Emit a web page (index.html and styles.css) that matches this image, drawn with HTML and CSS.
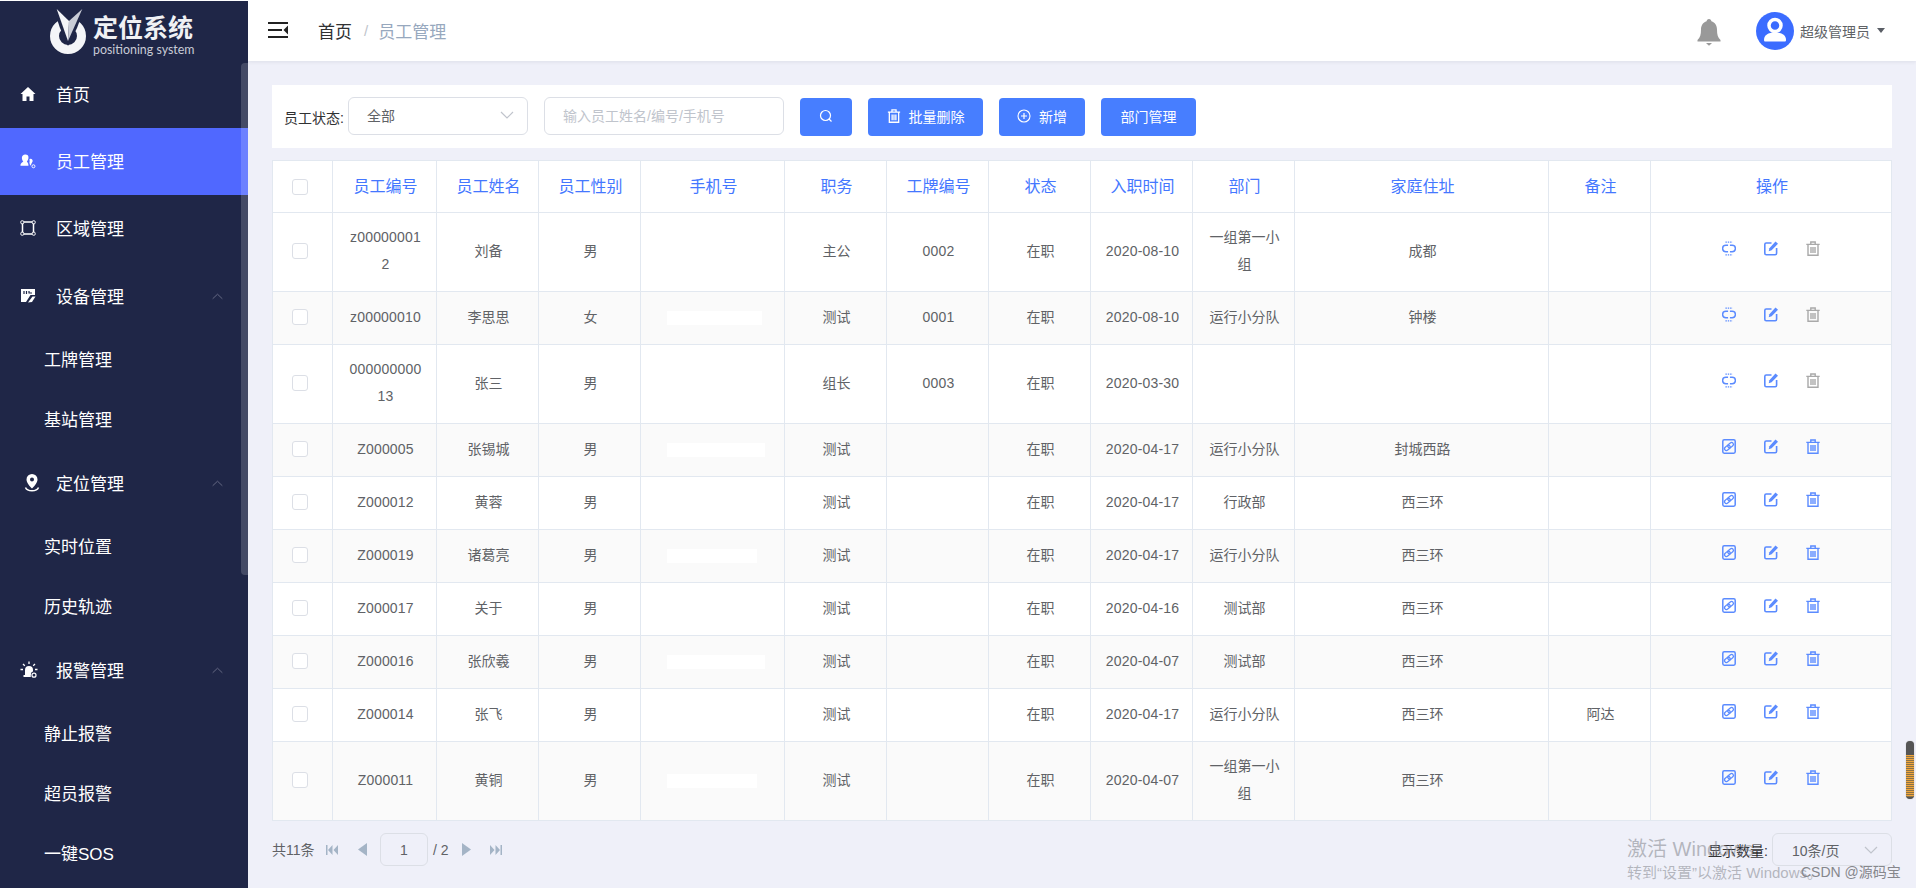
FILE: index.html
```html
<!DOCTYPE html>
<html lang="zh-CN">
<head>
<meta charset="utf-8">
<title>定位系统 - 员工管理</title>
<link rel="stylesheet" href="styles.css">
</head>
<body>
<svg class="defs" aria-hidden="true">
  <symbol id="i-unlink" viewBox="0 0 14 16"><g fill="none" stroke="currentColor"><path stroke-width="1.500" d="M6 4.600H3.600a3.400 3.400 0 0 0 0 6.800H6M8 4.600h2.400a3.400 3.400 0 0 1 0 6.800H8"/><path stroke-width="1.400" stroke-dasharray="1.500 1" d="M3.200 1.200h7.600M3.200 14.800h7.600"/></g></symbol>
  <symbol id="i-link" viewBox="0 0 14 15"><g fill="none" stroke="currentColor"><rect x=".8" y=".8" width="12.400" height="13.400" rx="1.400" stroke-width="1.500"/><g transform="rotate(-40 7 7.500)" stroke-width="1.300"><rect x="1.800" y="5.600" width="6.200" height="3.800" rx="1.900"/><rect x="6" y="5.600" width="6.200" height="3.800" rx="1.900"/></g></g></symbol>
  <symbol id="i-edit" viewBox="0 0 14 14"><path fill="none" stroke="currentColor" stroke-width="1.600" d="M7.500 1.500H2.200A1.400 1.400 0 0 0 .8 2.900v8.900a1.400 1.400 0 0 0 1.400 1.400h9a1.400 1.400 0 0 0 1.400-1.400V6.500"/><path fill="currentColor" d="M11.500 0 14 2.200 7.600 8.800 4.700 9.700 5.400 6.700z"/></symbol>
  <symbol id="i-trash" viewBox="0 0 14 15"><g fill="none" stroke="currentColor" stroke-width="1.400"><path d="M.3 3.400h13.400M4.800 3.200V1h4.400v2.200M2 3.400v10.800h10V3.400M5 6v6M7 6v6M9 6v6"/></g></symbol>
</svg>

<aside class="sidebar">
  <div class="logo">
    <svg class="logo-mark" viewBox="0 0 37 46" aria-hidden="true">
      <circle cx="18" cy="28" r="13.500" fill="none" stroke="#f4f5f8" stroke-width="9"/>
      <path fill="#1f2647" d="M3-1H35L27 20 18 38 10 20z"/>
      <path fill="#f4f5f8" d="M6.700 1 19 13 18 33z"/>
      <path fill="#c9ccd6" d="M32.300 1 19 13 18 33z"/>
    </svg>
    <div class="logo-text">
      <div class="logo-cn">定位系统</div>
      <div class="logo-en">positioning system</div>
    </div>
  </div>
  <nav class="menu">
    <a class="item">
      <svg class="mi" viewBox="0 0 16 16"><path fill="#fff" d="M8 1 15.500 8H13.500V15H9.500V10.500H6.500V15H2.500V8H.5Z"/></svg>
      <span>首页</span>
    </a>
    <a class="item active">
      <svg class="mi" viewBox="0 0 17 16"><path fill="#fff" d="M5.500 1A3.400 3.400 0 0 1 9 4.500C9 6 8.200 7.500 7.300 8.500 8 9.500 9 10 9 13H.5C.5 10 2.500 9.500 3.500 8.500 2.500 7.500 2 6 2 4.500 2 2.500 3.500 1 5.500 1zM11 5.500a2.500 2.500 0 0 1 1.800 4.200c-.5.700-.8 1.300-.8 1.800l-1.200 1.500-.8-3.500c.4-.8.300-2.200 0-3.600z"/><circle cx="14.300" cy="13.600" r="1.600" fill="none" stroke="#fff" stroke-width="1"/></svg>
      <span>员工管理</span>
    </a>
    <a class="item">
      <svg class="mi" viewBox="0 0 16 16"><g fill="none" stroke="#fff"><rect x="2.500" y="2" width="11" height="12" stroke-width="1.500"/><rect x=".8" y=".8" width="3" height="3" rx="1" fill="#1f2647"/><rect x="12.200" y=".8" width="3" height="3" rx="1" fill="#1f2647"/><rect x=".8" y="12.200" width="3" height="3" rx="1" fill="#1f2647"/><rect x="12.200" y="12.200" width="3" height="3" rx="1" fill="#1f2647"/></g></svg>
      <span>区域管理</span>
    </a>
    <a class="item parent">
      <svg class="mi" viewBox="0 0 16 16"><path fill="#fff" d="M1 1h14v6H10.500L6 14H1z"/><path stroke="#1f2647" stroke-width="1.200" fill="none" d="M4 3v3M6.500 3v3M9 3v2h3"/><path fill="#fff" d="M8 14.500 12.500 8.500h3L12 14z"/></svg>
      <span>设备管理</span>
      <svg class="chev" viewBox="0 0 12 7"><path fill="none" stroke="#6a6f88" stroke-width="1" d="M.7 6 6 1l5.300 5"/></svg>
    </a>
    <a class="sub">工牌管理</a>
    <a class="sub">基站管理</a>
    <a class="item parent">
      <svg class="mi pin" viewBox="0 0 16 18"><path fill="#fff" fill-rule="evenodd" d="M8 0a5.500 5.500 0 0 1 5.500 5.500C13.500 9 10 12.500 8 14.500 6 12.500 2.500 9 2.500 5.500A5.500 5.500 0 0 1 8 0zm0 3.600a2 2 0 1 0 0 4 2 2 0 0 0 0-4z"/><path fill="none" stroke="#fff" stroke-width="1.500" d="M1.500 13.500c1 2.500 3 3.300 6.500 3.300s5.500-.8 6.500-3.300"/></svg>
      <span>定位管理</span>
      <svg class="chev" viewBox="0 0 12 7"><path fill="none" stroke="#6a6f88" stroke-width="1" d="M.7 6 6 1l5.300 5"/></svg>
    </a>
    <a class="sub">实时位置</a>
    <a class="sub">历史轨迹</a>
    <a class="item parent">
      <svg class="mi alarm" viewBox="0 0 18 17"><path fill="#fff" d="M5 14V9a4 4 0 0 1 8 0v1.500a3 3 0 0 0-2 3.500z"/><path fill="#fff" d="M3.500 14h7.300v2h-7.300z"/><circle cx="14" cy="14.200" r="2" fill="none" stroke="#fff" stroke-width="1.200"/><path stroke="#fff" stroke-width="1.300" fill="none" d="M9 .5v2.500M3 3l1.800 1.800M15 3l-1.800 1.800M.5 8.500H3M15 8.500h2.500"/></svg>
      <span>报警管理</span>
      <svg class="chev" viewBox="0 0 12 7"><path fill="none" stroke="#6a6f88" stroke-width="1" d="M.7 6 6 1l5.300 5"/></svg>
    </a>
    <a class="sub">静止报警</a>
    <a class="sub">超员报警</a>
    <a class="sub">一键SOS</a>
  </nav>
  <div class="side-scroll"></div>
</aside>

<main class="main">
  <header class="topbar">
    <svg class="burger" viewBox="0 0 20 16"><path fill="#222" d="M0 0h20v2H0zM0 7h14v2H0zM0 14h20v2H0z"/><path fill="#222" d="M20 3.500v9L15.500 8z"/></svg>
    <div class="crumbs"><span class="c-home">首页</span><span class="c-sep">/</span><span class="c-cur">员工管理</span></div>
    <svg class="bell" viewBox="0 0 24 28"><path fill="#999" d="M12 1c1.500 0 2.300 1 2.400 2.300C18 4.500 20 7.500 20 11.500c0 5 .8 8 3.500 10.500v1.500H.5V22C3.200 19.500 4 16.500 4 11.500c0-4 2-7 5.600-8.200C9.700 2 10.500 1 12 1z"/><path fill="#999" d="M9 25h6l-3 2.800z"/></svg>
    <div class="user">
      <div class="avatar"><svg viewBox="0 0 38 38"><circle cx="19" cy="13.500" r="6" fill="none" stroke="#fff" stroke-width="3.500"/><path fill="#fff" d="M8 28c0-5 4-7.500 11-7.500S30 23 30 28c0 1-.5 1.500-1.500 1.500h-19C8.500 29.500 8 29 8 28z"/></svg></div>
      <span class="uname">超级管理员</span>
      <i class="caret"></i>
    </div>
  </header>

  <section class="toolbar">
    <label class="lbl">员工状态:</label>
    <div class="select"><span>全部</span><svg class="sel-chev" viewBox="0 0 14 8"><path fill="none" stroke="#c0c4cc" stroke-width="1.200" d="M1 1l6 6 6-6"/></svg></div>
    <div class="input">输入员工姓名/编号/手机号</div>
    <button class="btn btn-search"><svg viewBox="0 0 14 14"><circle cx="6.500" cy="6.500" r="5" fill="none" stroke="#fff" stroke-width="1.200"/><path stroke="#fff" stroke-width="1.200" d="M10 10l2.500 2.500"/></svg></button>
    <button class="btn"><svg viewBox="0 0 14 15"><use href="#i-trash"/></svg>批量删除</button>
    <button class="btn"><svg viewBox="0 0 14 14"><circle cx="7" cy="7" r="6" fill="none" stroke="#fff" stroke-width="1.100"/><path stroke="#fff" stroke-width="1.200" d="M7 4v6M4 7h6"/></svg>新增</button>
    <button class="btn">部门管理</button>
  </section>

  <table class="grid">
    <colgroup><col class="c0"><col class="c1"><col class="c2"><col class="c3"><col class="c4"><col class="c5"><col class="c6"><col class="c7"><col class="c8"><col class="c9"><col class="c10"><col class="c11"><col class="c12"></colgroup>
    <thead>
      <tr><th><i class="cb"></i></th><th>员工编号</th><th>员工姓名</th><th>员工性别</th><th>手机号</th><th>职务</th><th>工牌编号</th><th>状态</th><th>入职时间</th><th>部门</th><th>家庭住址</th><th>备注</th><th>操作</th></tr>
    </thead>
    <tbody>
      <tr><td><i class="cb"></i></td><td>z00000001<br>2</td><td>刘备</td><td>男</td><td></td><td>主公</td><td>0002</td><td>在职</td><td>2020-08-10</td><td>一组第一小<br>组</td><td>成都</td><td></td><td><div class="ops off"><svg class="o-link"><use href="#i-unlink"/></svg><svg class="o-edit"><use href="#i-edit"/></svg><svg class="o-del"><use href="#i-trash"/></svg></div></td></tr>
      <tr><td><i class="cb"></i></td><td>z00000010</td><td>李思思</td><td>女</td><td><i class="mask m1"></i></td><td>测试</td><td>0001</td><td>在职</td><td>2020-08-10</td><td>运行小分队</td><td>钟楼</td><td></td><td><div class="ops off"><svg class="o-link"><use href="#i-unlink"/></svg><svg class="o-edit"><use href="#i-edit"/></svg><svg class="o-del"><use href="#i-trash"/></svg></div></td></tr>
      <tr><td><i class="cb"></i></td><td>000000000<br>13</td><td>张三</td><td>男</td><td></td><td>组长</td><td>0003</td><td>在职</td><td>2020-03-30</td><td></td><td></td><td></td><td><div class="ops off"><svg class="o-link"><use href="#i-unlink"/></svg><svg class="o-edit"><use href="#i-edit"/></svg><svg class="o-del"><use href="#i-trash"/></svg></div></td></tr>
      <tr><td><i class="cb"></i></td><td>Z000005</td><td>张锡城</td><td>男</td><td><i class="mask m2"></i></td><td>测试</td><td></td><td>在职</td><td>2020-04-17</td><td>运行小分队</td><td>封城西路</td><td></td><td><div class="ops"><svg class="o-link"><use href="#i-link"/></svg><svg class="o-edit"><use href="#i-edit"/></svg><svg class="o-del"><use href="#i-trash"/></svg></div></td></tr>
      <tr><td><i class="cb"></i></td><td>Z000012</td><td>黄蓉</td><td>男</td><td></td><td>测试</td><td></td><td>在职</td><td>2020-04-17</td><td>行政部</td><td>西三环</td><td></td><td><div class="ops"><svg class="o-link"><use href="#i-link"/></svg><svg class="o-edit"><use href="#i-edit"/></svg><svg class="o-del"><use href="#i-trash"/></svg></div></td></tr>
      <tr><td><i class="cb"></i></td><td>Z000019</td><td>诸葛亮</td><td>男</td><td><i class="mask m3"></i></td><td>测试</td><td></td><td>在职</td><td>2020-04-17</td><td>运行小分队</td><td>西三环</td><td></td><td><div class="ops"><svg class="o-link"><use href="#i-link"/></svg><svg class="o-edit"><use href="#i-edit"/></svg><svg class="o-del"><use href="#i-trash"/></svg></div></td></tr>
      <tr><td><i class="cb"></i></td><td>Z000017</td><td>关于</td><td>男</td><td></td><td>测试</td><td></td><td>在职</td><td>2020-04-16</td><td>测试部</td><td>西三环</td><td></td><td><div class="ops"><svg class="o-link"><use href="#i-link"/></svg><svg class="o-edit"><use href="#i-edit"/></svg><svg class="o-del"><use href="#i-trash"/></svg></div></td></tr>
      <tr><td><i class="cb"></i></td><td>Z000016</td><td>张欣羲</td><td>男</td><td><i class="mask m2"></i></td><td>测试</td><td></td><td>在职</td><td>2020-04-07</td><td>测试部</td><td>西三环</td><td></td><td><div class="ops"><svg class="o-link"><use href="#i-link"/></svg><svg class="o-edit"><use href="#i-edit"/></svg><svg class="o-del"><use href="#i-trash"/></svg></div></td></tr>
      <tr><td><i class="cb"></i></td><td>Z000014</td><td>张飞</td><td>男</td><td></td><td>测试</td><td></td><td>在职</td><td>2020-04-17</td><td>运行小分队</td><td>西三环</td><td>阿达</td><td><div class="ops"><svg class="o-link"><use href="#i-link"/></svg><svg class="o-edit"><use href="#i-edit"/></svg><svg class="o-del"><use href="#i-trash"/></svg></div></td></tr>
      <tr><td><i class="cb"></i></td><td>Z000011</td><td>黄铜</td><td>男</td><td><i class="mask m3"></i></td><td>测试</td><td></td><td>在职</td><td>2020-04-07</td><td>一组第一小<br>组</td><td>西三环</td><td></td><td><div class="ops"><svg class="o-link"><use href="#i-link"/></svg><svg class="o-edit"><use href="#i-edit"/></svg><svg class="o-del"><use href="#i-trash"/></svg></div></td></tr>
    </tbody>
  </table>

  <footer class="pager">
    <span class="total">共11条</span>
    <svg class="pg pg-first" viewBox="0 0 12 10"><path fill="#a4b4c6" d="M0 0h1.500v10H0zM6.500 0v10L2 5zM12 0v10L7.500 5z"/></svg>
    <svg class="pg pg-prev" viewBox="0 0 9 13"><path fill="#a4b4c6" d="M9 0v13L0 6.500z"/></svg>
    <div class="page-no">1</div>
    <span class="page-of">/ 2</span>
    <svg class="pg pg-next" viewBox="0 0 9 13"><path fill="#a4b4c6" d="M0 0v13l9-6.500z"/></svg>
    <svg class="pg pg-last" viewBox="0 0 12 10"><path fill="#a4b4c6" d="M0 0v10l4.500-5zM5.500 0v10L10 5zM10.500 0H12v10h-1.500z"/></svg>
    <span class="per-lbl">显示数量:</span>
    <div class="per"><span>10条/页</span><svg class="sel-chev" viewBox="0 0 14 8"><path fill="none" stroke="#c0c4cc" stroke-width="1.200" d="M1 1l6 6 6-6"/></svg></div>
  </footer>
</main>

<div class="watermark"><div class="wm1">激活 Windows</div><div class="wm2">转到“设置”以激活 Windows。</div></div>
<div class="csdn">CSDN @源码宝</div>
<div class="scroll-thumb"><div class="stripes"></div></div>
</body>
</html>
```

FILE: styles.css
```css
* { box-sizing: border-box; }
html, body { margin: 0; height: 100%; }
body {
  display: flex;
  height: 888px;
  overflow: hidden;
  position: relative;
  background: #eff0f9;
  font-family: "Liberation Sans", "Noto Sans CJK SC", sans-serif;
  font-size: 14px;
  color: #606266;
}
.defs { position: absolute; width: 0; height: 0; }

/* sidebar */
.sidebar {
  width: 248px;
  flex: none;
  height: 888px;
  position: relative;
  background: #1f2647;
  color: #fff;
  border-top: 1px solid #fff;
  overflow: hidden;
}
.logo { height: 60px; display: flex; padding: 7px 0 0 50px; gap: 6px; }
.logo-mark { width: 37px; height: 46px; flex: none; }
.logo-text { padding-top: 5px; }
.logo-cn { font-size: 25px; line-height: 30px; font-weight: 700; color: #f0f1f4; white-space: nowrap; }
.logo-en { font-family: Lato, "Liberation Sans", sans-serif; font-size: 12.400px; line-height: 13px; color: #c8cbd6; white-space: nowrap; }
.menu { display: flex; flex-direction: column; }
.item { height: 67px; display: flex; align-items: center; padding-left: 20px; font-size: 17px; position: relative; }
.item:not(.parent) { padding-bottom: 2px; }
.item.active { background: #5068ff; }
.item span { margin-left: 20px; }
.mi { width: 16px; height: 16px; flex: none; overflow: visible; }
.pin { height: 18px; margin-left: 4px; margin-right: -4px; }
.alarm { width: 18px; height: 17px; margin-right: -2px; }
.sub { height: 60px; display: flex; align-items: center; padding: 0 0 2px 44px; font-size: 17px; }
.chev { position: absolute; left: 212px; top: 31px; width: 11px; height: 7px; }
.side-scroll { position: absolute; left: 241px; top: 62px; width: 7px; height: 512px; border-radius: 4px 0 0 4px; background: rgba(255, 255, 255, .17); }

/* main */
.main { flex: 1; min-width: 0; display: flex; flex-direction: column; padding: 0 24px; }
.topbar {
  height: 61px;
  margin: 0 -24px;
  padding: 0 31px 0 20px;
  background: #fff;
  box-shadow: 0 1px 4px rgba(0, 21, 41, .08);
  display: flex;
  align-items: center;
  flex: none;
}
.burger { width: 20px; height: 16px; flex: none; margin-top: -2px; }
.crumbs { margin-left: 30px; display: flex; align-items: center; font-size: 17px; flex: 1; }
.c-home { color: #303133; }
.c-sep { color: #c0c4cc; margin: 0 11px 0 12px; font-size: 15px; }
.c-cur { color: #97a8be; margin-left: -1px; }
.bell { width: 24px; height: 28px; flex: none; margin: 3px 35px 0 0; }
.user { display: flex; align-items: center; }
.avatar { width: 38px; height: 38px; border-radius: 50%; background: #3b6cff; }
.avatar svg { display: block; width: 38px; height: 38px; }
.uname { margin-left: 6px; font-size: 14px; }
.caret { width: 0; height: 0; border: 4px solid transparent; border-top: 5px solid #5a5e66; border-bottom: 0; margin-left: 7px; }

.toolbar {
  margin-top: 24px;
  height: 63px;
  width: 1620px;
  background: #fff;
  display: flex;
  align-items: center;
  padding-left: 12px;
  flex: none;
}
.lbl { color: #303133; width: 64px; flex: none; }
.select, .input, .per {
  height: 38px;
  border: 1px solid #dcdfe6;
  border-radius: 6px;
  display: flex;
  align-items: center;
  justify-content: space-between;
  flex: none;
}
.select, .input { margin-bottom: 2px; }
.select { width: 180px; padding: 0 13px 1px 18px; }
.input { width: 240px; margin-left: 16px; padding: 0 18px 1px; color: #c0c4cc; justify-content: flex-start; }
.sel-chev { width: 14px; height: 8px; }
.btn {
  height: 38px;
  margin-left: 16px;
  padding: 0 20px 2px;
  border: 0;
  border-radius: 4px;
  background: #477eff;
  color: #fff;
  font: inherit;
  font-size: 14px;
  display: flex;
  align-items: center;
  gap: 8px;
  flex: none;
}
.btn svg { width: 14px; height: 14px; }
.btn-search { width: 52px; justify-content: center; padding: 0 0 2px; }
.toolbar .btn:nth-of-type(2) { width: 115px; justify-content: center; padding: 0 0 2px; }
.toolbar .btn:nth-of-type(3) { width: 86px; justify-content: center; padding: 0 0 2px; }
.toolbar .btn:nth-of-type(4) { width: 95px; justify-content: center; padding: 0 0 2px; }

/* table */
.grid {
  margin-top: 12px;
  width: 1619px;
  table-layout: fixed;
  border-spacing: 0;
  background: #fff;
  border-top: 1px solid #e2e8f0;
  border-left: 1px solid #e2e8f0;
  flex: none;
}
.c0 { width: 60px; } .c1 { width: 104px; } .c2 { width: 102px; } .c3 { width: 102px; }
.c4 { width: 144px; } .c5 { width: 102px; } .c6 { width: 102px; } .c7 { width: 102px; }
.c8 { width: 102px; } .c9 { width: 102px; } .c10 { width: 254px; } .c11 { width: 102px; } .c12 { width: 241px; }
.grid th, .grid td {
  height: 53px;
  padding: 11px 5px 13px 7px;
  line-height: 27px;
  text-align: center;
  vertical-align: middle;
  border-right: 1px solid #e2e8f0;
  border-bottom: 1px solid #e2e8f0;
}
.grid th { height: 52px; padding: 12px 5px 12px 7px; font-weight: 400; font-size: 16px; color: #4477ff; }
.grid td:nth-child(2), .grid td:nth-child(7), .grid td:nth-child(9) { letter-spacing: .2px; }
.grid tbody tr:nth-child(even) td { background: #fafafa; }
.cb { display: inline-block; width: 16px; height: 16px; background: #fff; border: 1px solid #dcdfe6; border-radius: 3px; vertical-align: middle; margin: 0 7px 2px 0; }
.mask { display: inline-block; height: 14px; background: #fff; vertical-align: middle; }
td:has(> .mask) { text-align: left; padding-left: 26px; }
.m1 { width: 95px; } .m2 { width: 98px; } .m3 { width: 90px; }
.ops { display: flex; justify-content: center; gap: 28px; margin: 0 2px 6px 0; }
.ops svg { width: 14px; height: 15px; display: block; color: #5b8bff; }
.ops.off .o-del { color: #a9a9a9; }

/* pager */
.pager { margin-top: 12px; height: 33px; width: 1620px; display: flex; align-items: center; flex: none; }
.total { width: 54px; flex: none; padding-bottom: 1px; }
.pg { flex: none; }
.pg-first { width: 12px; height: 10px; }
.pg-prev { width: 9px; height: 13px; margin-left: 20px; }
.page-no { width: 48px; height: 33px; margin-left: 13px; border: 1px solid #dcdfe6; border-radius: 6px; display: flex; align-items: center; justify-content: center; }
.page-of { margin-left: 5px; width: 24px; flex: none; }
.pg-next { width: 9px; height: 13px; margin-left: 5px; }
.pg-last { width: 12px; height: 10px; margin-left: 19px; }
.per-lbl { margin-left: auto; color: #303133; margin-right: 4px; }
.per { width: 120px; height: 33px; padding: 0 13px 0 19px; }

/* overlays */
.watermark { position: absolute; left: 1627px; top: 835px; color: rgba(120, 122, 130, .5); white-space: nowrap; }
.wm1 { font-size: 20px; line-height: 28px; }
.wm2 { font-size: 15px; line-height: 20px; }
.csdn { position: absolute; left: 1801px; top: 863px; font-size: 14px; line-height: 18px; color: #86878c; white-space: nowrap; }
.scroll-thumb { position: absolute; left: 1906px; top: 741px; width: 8px; height: 58px; background: #555; border-radius: 4px; overflow: hidden; box-shadow: 0 0 1px #999; padding-top: 14px; }
.stripes { height: 42px; background: repeating-linear-gradient(to bottom, #f0a53c 0, #f0a53c 1px, #8a7248 1px, #8a7248 2px); }
```
